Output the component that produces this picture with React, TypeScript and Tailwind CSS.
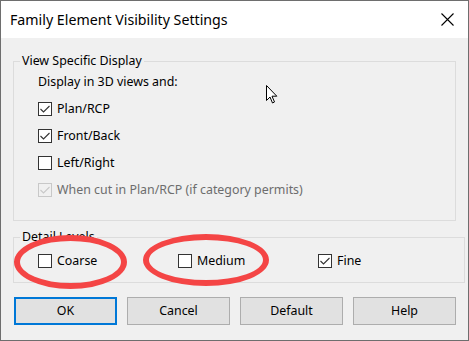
import React from 'react';

interface CheckProps {
  label: string;
  checked?: boolean;
  disabled?: boolean;
}

const CheckBox: React.FC<CheckProps> = ({ label, checked = false, disabled = false }) => {
  return (
    <div className="flex items-center gap-[5px]">
      <span
        className={`w-[14px] h-[14px] border flex items-center justify-center ${
          disabled ? 'border-[#c8c8c8] bg-[#f0f0f0]' : 'border-[#333333] bg-white'
        }`}
      >
        {checked && (
          <svg width="12" height="12" viewBox="0 0 12 12">
            <polyline
              points="1.5,6 4.5,9 10.5,3"
              fill="none"
              stroke={disabled ? '#c8c8c8' : '#333333'}
              strokeWidth="1.1"
            />
          </svg>
        )}
      </span>
      <span className={disabled ? 'text-[#6d6d6d]' : 'text-black'}>{label}</span>
    </div>
  );
};

const DialogButton: React.FC<{ label: string; primary?: boolean }> = ({ label, primary }) => (
  <button
    className={`h-[28px] bg-[#e1e1e1] flex items-center justify-center ${
      primary ? 'border-2 border-[#0078d7]' : 'border border-[#adadad]'
    }`}
  >
    {label}
  </button>
);

export default function App() {
  return (
    <div className="relative w-[469px] h-[341px] border border-[#6e6e6e] bg-[#f0f0f0] flex flex-col font-['Noto_Sans',sans-serif] text-[12.4px] text-black">
      {/* Title bar */}
      <div className="h-[37px] bg-white flex items-center justify-between pl-[9px] pr-[14px]">
        <span className="text-[14.2px] text-black">Family Element Visibility Settings</span>
        <svg width="13" height="13" viewBox="0 0 13 13">
          <path d="M0.5 0.5 L12.5 12.5 M12.5 0.5 L0.5 12.5" stroke="#000" strokeWidth="1.1" />
        </svg>
      </div>

      <div className="flex-1 px-[12px] pt-[15px] flex flex-col">
        {/* View Specific Display */}
        <fieldset className="border border-[#dcdcdc] px-[6px] pb-[16px]">
          <legend className="px-[2px] leading-[16px]">View Specific Display</legend>
          <div className="pl-[18px] flex flex-col">
            <div className="h-[27px] flex items-center">Display in 3D views and:</div>
            <div className="h-[27px] flex items-center">
              <CheckBox label="Plan/RCP" checked />
            </div>
            <div className="h-[27px] flex items-center">
              <CheckBox label="Front/Back" checked />
            </div>
            <div className="h-[27px] flex items-center">
              <CheckBox label="Left/Right" />
            </div>
            <div className="h-[27px] flex items-center">
              <CheckBox label="When cut in Plan/RCP (if category permits)" checked disabled />
            </div>
          </div>
        </fieldset>

        {/* Detail Levels */}
        <fieldset className="mt-[8px] border border-[#dcdcdc] px-[6px] pb-[5px]">
          <legend className="px-[2px] leading-[16px]">Detail Levels</legend>
          <div className="pl-[18px] h-[32px] flex items-center">
            <div className="w-[140px]">
              <CheckBox label="Coarse" />
            </div>
            <div className="w-[140px]">
              <CheckBox label="Medium" />
            </div>
            <div className="w-[140px]">
              <CheckBox label="Fine" checked />
            </div>
          </div>
        </fieldset>

        {/* Buttons */}
        <div className="mt-[14px] ml-[1px] grid grid-cols-4 gap-[10px]">
          <DialogButton label="OK" primary />
          <DialogButton label="Cancel" />
          <DialogButton label="Default" />
          <DialogButton label="Help" />
        </div>
      </div>

      {/* red annotation rings */}
      <div className="absolute left-[13px] top-[234px] w-[113px] h-[54px] rounded-[50%] border-[6px] border-[#f44545]" />
      <div className="absolute left-[142px] top-[233px] w-[126px] h-[52px] rounded-[50%] border-[6px] border-[#f44545]" />

      {/* mouse pointer */}
      <svg className="absolute left-[265px] top-[84px]" width="13" height="20" viewBox="0 0 13 20">
        <path
          d="M0.5 0.5 L0.5 15.5 L4 12 L6.5 18 L8.5 17 L6 11.2 L10.8 11.2 Z"
          fill="#fff"
          stroke="#000"
          strokeWidth="1"
          strokeLinejoin="miter"
        />
      </svg>
    </div>
  );
}
